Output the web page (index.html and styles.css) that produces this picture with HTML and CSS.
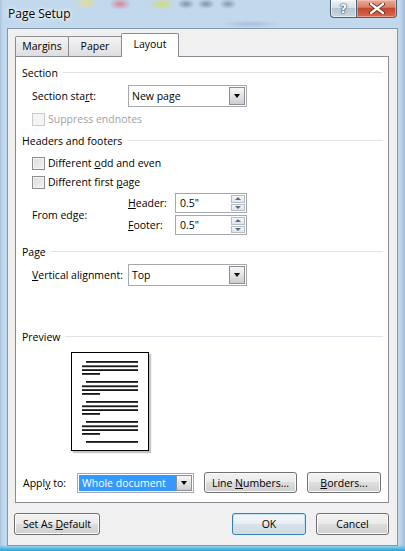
FILE: index.html
```html
<!DOCTYPE html>
<html>
<head>
<meta charset="utf-8">
<title>Page Setup</title>
<link rel="stylesheet" href="styles.css">
</head>
<body>
<div class="window">
  <div class="titlebar">
    <span class="title">Page Setup</span>
    <div class="caption">
      <span class="cbtn help">?</span>
      <span class="cbtn close">
        <svg width="16" height="11" viewBox="0 0 16 11"><path d="M2 1 L14 10 M14 1 L2 10" stroke="#5a2a22" stroke-width="4" stroke-linecap="round"/><path d="M2 1 L14 10 M14 1 L2 10" stroke="#fff" stroke-width="2.2" stroke-linecap="round"/></svg>
      </span>
    </div>
  </div>
  <div class="client">
    <div class="tabs">
      <span class="tab">Margins</span>
      <span class="tab">Paper</span>
      <span class="tab active">Layout</span>
    </div>
    <div class="panel">
      <div class="group first"><span>Section</span></div>
      <div class="field">
        <span class="lbl">Section sta<u>r</u>t:</span>
        <div class="combo"><span class="val">New page</span><span class="dd"><i></i></span></div>
      </div>
      <div class="check disabled mt5"><span class="box"></span><span>Suppress endnotes</span></div>

      <div class="group"><span>Headers and footers</span></div>
      <div class="check mt7"><span class="box"></span><span>Different <u>o</u>dd and even</span></div>
      <div class="check mt5"><span class="box"></span><span>Different first <u>p</u>age</span></div>
      <div class="edge">
        <span class="edge-lbl">From edge:</span>
        <span class="lbl2"><u>H</u>eader:</span>
        <div class="spin"><span class="val">0.5"</span><span class="arrows"><span class="up"><i></i></span><span class="down"><i></i></span></span></div>
        <span class="lbl2"><u>F</u>ooter:</span>
        <div class="spin"><span class="val">0.5"</span><span class="arrows"><span class="up"><i></i></span><span class="down"><i></i></span></span></div>
      </div>

      <div class="group page"><span>Page</span></div>
      <div class="field">
        <span class="lbl"><u>V</u>ertical alignment:</span>
        <div class="combo"><span class="val">Top</span><span class="dd"><i></i></span></div>
      </div>

      <div class="group preview"><span>Preview</span></div>
      <div class="sheet">
        <svg width="76" height="97" viewBox="0 0 76 97">
          <g fill="#151515">
            <rect x="14" y="8" width="52" height="1.8"/>
            <rect x="10" y="12.4" width="56" height="1.8"/>
            <rect x="10" y="16.2" width="56" height="1.8"/>
            <rect x="10" y="20" width="18" height="1.8"/>
            <rect x="14" y="28" width="52" height="1.8"/>
            <rect x="10" y="32.4" width="56" height="1.8"/>
            <rect x="10" y="36.2" width="56" height="1.8"/>
            <rect x="10" y="40" width="18" height="1.8"/>
            <rect x="14" y="48" width="52" height="1.8"/>
            <rect x="10" y="52.4" width="56" height="1.8"/>
            <rect x="10" y="56.2" width="56" height="1.8"/>
            <rect x="10" y="60" width="18" height="1.8"/>
            <rect x="14" y="68" width="52" height="1.8"/>
            <rect x="10" y="72.4" width="56" height="1.8"/>
            <rect x="10" y="76.2" width="56" height="1.8"/>
            <rect x="10" y="80" width="18" height="1.8"/>
            <rect x="14" y="88" width="52" height="1.8"/>
          </g>
        </svg>
      </div>

      <div class="apply">
        <span class="apply-lbl">Appl<u>y</u> to:</span>
        <div class="combo small"><span class="val sel">Whole document</span><span class="dd"><i></i></span></div>
        <span class="btn w93"><span>Line <u>N</u>umbers...</span></span>
        <span class="btn w74"><span><u>B</u>orders...</span></span>
      </div>
    </div>
    <div class="footer">
      <span class="btn w86 first"><span>Set As <u>D</u>efault</span></span>
      <span class="spacer"></span>
      <span class="btn w74 default"><span>OK</span></span>
      <span class="btn w73"><span>Cancel</span></span>
    </div>
  </div>
</div>
</body>
</html>
```
FILE: styles.css
```css
* { box-sizing: border-box; }
html, body { margin: 0; padding: 0; }
body {
  width: 405px;
  height: 551px;
  overflow: hidden;
  font-family: "Open Sans", "Noto Sans", sans-serif;
  font-size: 10.5px;
  color: #000;
}
u { text-decoration: underline; text-underline-offset: 1px; }

.window {
  width: 405px;
  height: 551px;
  display: flex;
  flex-direction: column;
  background:
    linear-gradient(0deg, #2f9fd6 0, #5cc0ea 3px, rgba(120, 200, 235, 0) 6px),
    radial-gradient(ellipse 12px 6px at 86px 3px, rgba(235, 225, 110, .75), transparent),
    radial-gradient(ellipse 11px 6px at 120px 4px, rgba(225, 100, 120, .7), transparent),
    radial-gradient(ellipse 14px 6px at 162px 4px, rgba(215, 220, 100, .8), transparent),
    radial-gradient(ellipse 9px 5px at 186px 4px, rgba(90, 100, 120, .6), transparent),
    radial-gradient(ellipse 9px 5px at 206px 4px, rgba(90, 100, 120, .6), transparent),
    radial-gradient(ellipse 9px 5px at 228px 4px, rgba(90, 100, 120, .55), transparent),
    radial-gradient(ellipse 30px 4px at 250px 24px, rgba(120, 150, 185, .35), transparent),
    linear-gradient(90deg, #a9c4de 0, #c2d8ed 3px, #c2d8ed 400px, #9fbbd6 405px),
    linear-gradient(180deg, #dde9f5 0, #c9dcee 28px, #bdd4ea 100%);
}

/* title bar */
.titlebar {
  height: 28px;
  display: flex;
  justify-content: space-between;
  align-items: flex-start;
}
.title {
  margin: 6px 0 0 8px;
  font-size: 12px;
  line-height: 16px;
  color: #000;
  text-shadow: 0 0 6px #fff, 0 0 3px #fff;
}
.caption {
  display: flex;
  margin-right: 8px;
  height: 18px;
}
.cbtn {
  height: 18px;
  display: flex;
  align-items: center;
  justify-content: center;
  border: 1px solid #4f5f70;
  border-top: none;
}
.help {
  width: 26px;
  border-radius: 0 0 0 4px;
  border-right: none;
  background: linear-gradient(180deg, #eef3f8 0, #d6e0ea 45%, #b8c6d4 50%, #c9d6e2 100%);
  box-shadow: inset 0 0 0 1px rgba(255, 255, 255, .6);
  font-family: "DejaVu Sans", sans-serif;
  font-weight: bold;
  font-size: 12px;
  color: #fff;
  text-shadow: 0 0 1px #34465a, 0 0 1px #34465a, 0 0 2px #34465a;
}
.close {
  width: 41px;
  border-radius: 0 0 4px 0;
  background: linear-gradient(180deg, #e9ab9c 0, #d8806a 42%, #c4472f 50%, #d66a4f 100%);
  box-shadow: inset 0 0 0 1px rgba(255, 210, 200, .5);
}

/* client */
.client {
  flex: 1;
  margin: 0 7px 5px 7px;
  border: 1px solid #8398ae;
  background: #f0f0f0;
  padding: 5px 8px 0 7px;
  display: flex;
  flex-direction: column;
}

.tabs {
  display: flex;
  align-items: flex-end;
  height: 22px;
}
.tab {
  height: 20px;
  width: 54px;
  margin-right: -1px;
  border: 1px solid #898c95;
  border-bottom: none;
  border-radius: 2px 2px 0 0;
  background: linear-gradient(180deg, #f4f4f4 0, #e9e9e9 50%, #dedede 100%);
  text-align: center;
  line-height: 18px;
}
.tab.active {
  height: 24px;
  width: 58px;
  margin-bottom: -1px;
  background: #fff;
  position: relative;
  z-index: 1;
  line-height: 20px;
}

.panel {
  height: 447px;
  border: 1px solid #898c95;
  background: #fff;
  padding: 8px 5px 9px 0;
}

.group {
  display: flex;
  align-items: center;
  height: 16px;
  margin-top: 7px;
  padding-left: 6px;
  color: #000;
}
.group::after {
  content: "";
  flex: 1;
  height: 1px;
  margin: 0 0 1px 5px;
  background: #dde3e8;
}
.group.first { margin-top: 0; }
.group.page { margin-top: 9px; }
.group.preview { margin-top: 43px; }

.field {
  display: flex;
  align-items: center;
  height: 22px;
  margin-top: 4px;
  padding-left: 16px;
}
.lbl { width: 96px; }

.combo {
  width: 119px;
  height: 22px;
  border: 1px solid #a5a8ae;
  background: #fff;
  display: flex;
  align-items: center;
  justify-content: space-between;
  padding: 0 1px 0 3px;
}
.combo.small {
  width: 117px;
  height: 20px;
  padding-left: 1px;
}
.dd {
  width: 16px;
  height: 18px;
  border: 1px solid #8b8f95;
  background: linear-gradient(180deg, #f6f6f6 0, #e4e4e4 50%, #cdcdcd 100%);
  display: flex;
  align-items: center;
  justify-content: center;
}
.combo.small .dd { height: 16px; }
.dd i {
  width: 0;
  height: 0;
  border-left: 3.5px solid transparent;
  border-right: 3.5px solid transparent;
  border-top: 4px solid #000;
}
.val.sel {
  background: #3399ff;
  color: #fff;
  height: 16px;
  line-height: 16px;
  width: 98px;
  padding-left: 3px;
}

.check {
  display: flex;
  align-items: center;
  height: 14px;
  padding-left: 16px;
}
.mt5 { margin-top: 5px; }
.mt7 { margin-top: 7px; }
.box {
  width: 13px;
  height: 13px;
  margin-right: 3px;
  border: 1px solid #8f8f8f;
  background: linear-gradient(135deg, #dcdcdc 0, #f4f4f4 100%);
  box-shadow: inset 0 0 0 1px #f4f4f4;
}
.check.disabled { color: #a2a2a2; }
.check.disabled .box {
  border-color: #c9c9c9;
  background: #f4f4f4;
}

.edge {
  display: grid;
  grid-template-columns: 96px 47px 72px;
  grid-template-rows: 20px 20px;
  row-gap: 2px;
  align-items: center;
  margin-top: 4px;
  padding-left: 16px;
}
.edge-lbl {
  grid-row: 1 / 3;
  align-self: center;
  padding-top: 2px;
}
.spin {
  height: 20px;
  border: 1px solid #a5a8ae;
  background: #fff;
  display: flex;
  align-items: center;
  justify-content: space-between;
  padding: 1px 1px 1px 4px;
}
.arrows {
  width: 14px;
  height: 16px;
  display: flex;
  flex-direction: column;
  gap: 1px;
}
.arrows span {
  flex: 1;
  border: 1px solid #b4bcc6;
  background: linear-gradient(180deg, #f3f6f9 0, #dfe6ed 100%);
  display: flex;
  align-items: center;
  justify-content: center;
}
.arrows .up i {
  border-left: 3px solid transparent;
  border-right: 3px solid transparent;
  border-bottom: 3px solid #5e6a78;
}
.arrows .down i {
  border-left: 3px solid transparent;
  border-right: 3px solid transparent;
  border-top: 3px solid #5e6a78;
}

.sheet {
  width: 78px;
  height: 99px;
  margin: 7px 0 0 55px;
  border: 1px solid #000;
  background: #fff;
  box-shadow: 2px 2px 1px #c4c4c4;
}
.sheet svg { display: block; }

.apply {
  display: flex;
  align-items: center;
  height: 21px;
  margin-top: 21px;
  padding-left: 7px;
}
.apply-lbl { width: 54px; }
.apply .combo { margin-right: 10px; }
.apply .btn.w93 { margin-right: 10px; }

.btn {
  height: 22px;
  border: 1px solid #707070;
  border-radius: 3px;
  background: linear-gradient(180deg, #f2f2f2 0, #ebebeb 50%, #dddddd 50%, #cfcfcf 100%);
  box-shadow: inset 0 0 0 1px #fbfbfb;
  display: flex;
  align-items: center;
  justify-content: center;
  white-space: nowrap;
}
.apply .btn { height: 21px; }
.btn.default {
  border-color: #3c7fb1;
  background: linear-gradient(180deg, #f3f7fa 0, #e8eef3 50%, #d8e2ea 50%, #cfdbe4 100%);
  box-shadow: inset 0 0 0 1px #bfe4f8;
}
.w93 { width: 93px; }
.w74 { width: 74px; }
.w73 { width: 73px; }
.w86 { width: 86px; }

.footer {
  display: flex;
  margin-top: 10px;
  gap: 10px;
}
.footer .first { margin-left: -1px; }
.spacer { flex: 1; }
```
